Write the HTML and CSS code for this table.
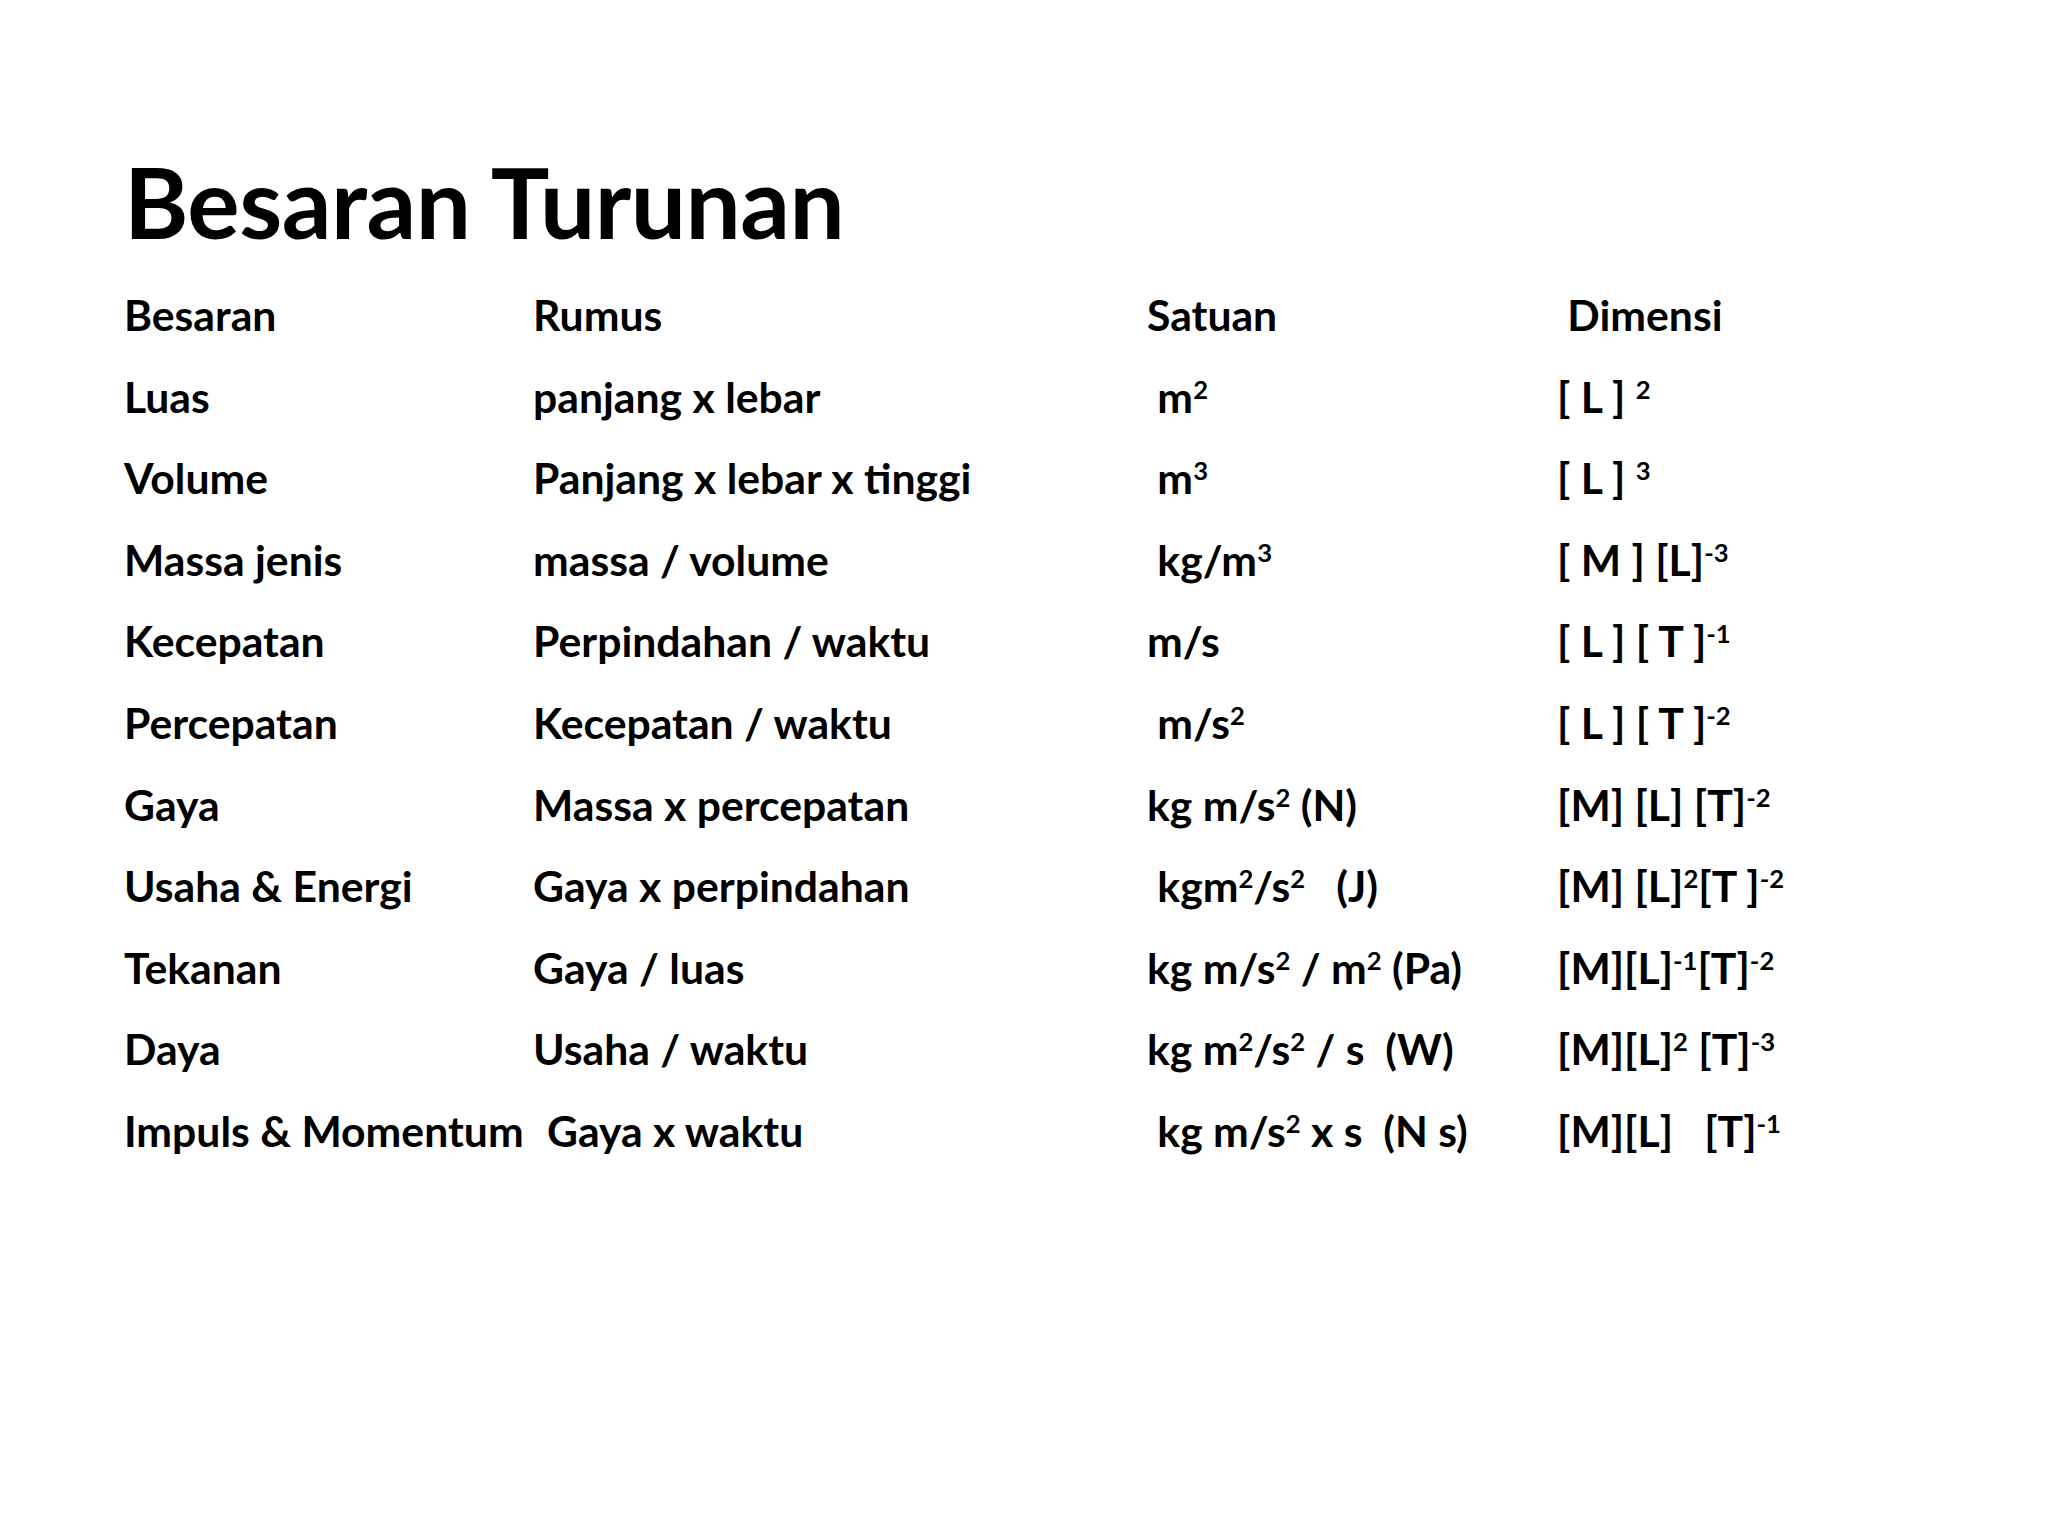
FILE: index.html
```html
<!DOCTYPE html>
<html lang="id">
<head>
<meta charset="utf-8">
<title>Besaran Turunan</title>
<link rel="stylesheet" href="styles.css">
</head>
<body>
<main class="slide">
  <h1 class="title">Besaran Turunan</h1>
  <div class="table">
    <div class="row"><span>Besaran</span><span>Rumus</span><span>Satuan</span><span> Dimensi</span></div>
    <div class="row"><span>Luas</span><span>panjang x lebar</span><span> m<span class="sup">2</span></span><span>[ L ] <span class="sup">2</span></span></div>
    <div class="row"><span>Volume</span><span>Panjang x lebar x tinggi</span><span> m<span class="sup">3</span></span><span>[ L ] <span class="sup">3</span></span></div>
    <div class="row"><span>Massa jenis</span><span>massa / volume</span><span> kg/m<span class="sup">3</span></span><span>[ M ] [L]<span class="sup">-3</span></span></div>
    <div class="row"><span>Kecepatan</span><span>Perpindahan / waktu</span><span>m/s</span><span>[ L ] [ T ]<span class="sup">-1</span></span></div>
    <div class="row"><span>Percepatan</span><span>Kecepatan / waktu</span><span> m/s<span class="sup">2</span></span><span>[ L ] [ T ]<span class="sup">-2</span></span></div>
    <div class="row"><span>Gaya</span><span>Massa x percepatan</span><span>kg m/s<span class="sup">2</span> (N)</span><span>[M] [L] [T]<span class="sup">-2</span></span></div>
    <div class="row"><span>Usaha &amp; Energi</span><span>Gaya x perpindahan</span><span> kgm<span class="sup">2</span>/s<span class="sup">2</span>   (J)</span><span>[M] [L]<span class="sup">2</span>[T ]<span class="sup">-2</span></span></div>
    <div class="row"><span>Tekanan</span><span>Gaya / luas</span><span>kg m/s<span class="sup">2</span> / m<span class="sup">2</span> (Pa)</span><span>[M][L]<span class="sup">-1</span>[T]<span class="sup">-2</span></span></div>
    <div class="row"><span>Daya</span><span>Usaha / waktu</span><span>kg m<span class="sup">2</span>/s<span class="sup">2</span> / s  (W)</span><span>[M][L]<span class="sup">2</span> [T]<span class="sup">-3</span></span></div>
    <div class="row"><span>Impuls &amp; Momentum</span><span class="shift">Gaya x waktu</span><span> kg m/s<span class="sup">2</span> x s  (N s)</span><span>[M][L]   [T]<span class="sup">-1</span></span></div>
  </div>
</main>
</body>
</html>
```
FILE: styles.css
```css
html, body {
  margin: 0;
  padding: 0;
  background: #ffffff;
}

body {
  width: 2048px;
  height: 1536px;
  overflow: hidden;
  font-family: "Lato", "Carlito", "Open Sans", sans-serif;
  font-weight: 700;
  color: #000000;
}

.slide {
  padding: 152px 0 0 124px;
}

.title {
  margin: 0;
  font-size: 98px;
  line-height: 98px;
  font-weight: 700;
  letter-spacing: -0.5px;
}

.table {
  margin-top: 24px;
  display: flex;
  flex-direction: column;
}

.row {
  display: grid;
  grid-template-columns: 409px 614px 410px auto;
  height: 81.6px;
  font-size: 42.7px;
  line-height: 81.6px;
  white-space: pre;
}

.row > span {
  overflow: visible;
}

.shift {
  padding-left: 14px;
}

.sup {
  font-size: 0.6em;
  vertical-align: 0.55em;
  line-height: 0;
}
```
